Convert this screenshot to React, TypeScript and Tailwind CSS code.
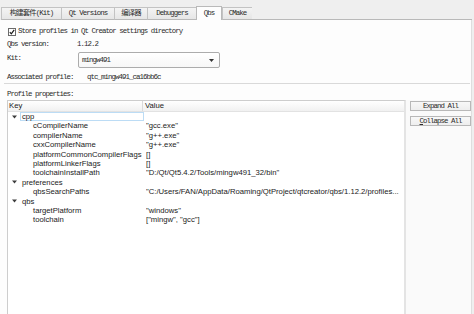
import React from "react"

const mono = "font-['Liberation_Mono','Noto_Sans_CJK_SC',monospace] text-[7.4px] tracking-[-0.94px] leading-[9px] text-[#2a2a2a]"
const sans = "font-['Liberation_Sans','Noto_Sans_CJK_SC',sans-serif] text-[7.7px] leading-[9.4px] text-[#1a1a1a]"

const tabs = [
    { label: "构建套件(Kit)", w: "w-[60px]" },
    { label: "Qt Versions", w: "w-[53px]" },
    { label: "编译器", w: "w-[33px]" },
    { label: "Debuggers", w: "w-[49px]" },
    { label: "Qbs", w: "w-[26px]", active: true },
    { label: "CMake", w: "w-[30px]" },
]

type Row = { key: string; value?: string; level: 0 | 1; focus?: boolean }

const rows: Row[] = [
    { key: "cpp", level: 0, focus: true },
    { key: "cCompilerName", value: "\"gcc.exe\"", level: 1 },
    { key: "compilerName", value: "\"g++.exe\"", level: 1 },
    { key: "cxxCompilerName", value: "\"g++.exe\"", level: 1 },
    { key: "platformCommonCompilerFlags", value: "[]", level: 1 },
    { key: "platformLinkerFlags", value: "[]", level: 1 },
    { key: "toolchainInstallPath", value: "\"D:/Qt/Qt5.4.2/Tools/mingw491_32/bin\"", level: 1 },
    { key: "preferences", level: 0 },
    { key: "qbsSearchPaths", value: "\"C:/Users/FAN/AppData/Roaming/QtProject/qtcreator/qbs/1.12.2/profiles...", level: 1 },
    { key: "qbs", level: 0 },
    { key: "targetPlatform", value: "\"windows\"", level: 1 },
    { key: "toolchain", value: "[\"mingw\", \"gcc\"]", level: 1 },
]

function Arrow() {
    return (
        <svg width="5" height="4" viewBox="0 0 5 4" className="ml-[4px] shrink-0">
            <path d="M0 0.5 L5 0.5 L2.5 3.5 Z" fill="#3c3c3c" />
        </svg>
    )
}

export default function App() {
    return (
        <div className="w-[474px] h-[314px] overflow-hidden bg-[#efefef] flex flex-col">
            {/* tab bar */}
            <div className="h-[20px] flex items-end pl-[1px] shrink-0">
                {tabs.map((t) =>
                    t.active ? (
                        <div
                            key={t.label}
                            className={`${t.w} h-[14px] bg-[#fdfdfd] border-l border-t border-r border-[#b9b9b9] flex items-center justify-center ${mono}`}
                        >
                            {t.label}
                        </div>
                    ) : (
                        <div
                            key={t.label}
                            className={`${t.w} h-[13px] bg-gradient-to-b from-[#f4f4f4] to-[#e6e6e6] border-l border-t border-b border-[#c3c3c3] border-b-[#b9b9b9] flex items-center justify-center pb-[1px] ${mono}`}
                        >
                            {t.label}
                        </div>
                    )
                )}
                <div className="w-[220px] h-[13px] border-b border-[#b9b9b9]" />
            </div>

            {/* panel */}
            <div className="w-[472px] flex-1 bg-[#fdfdfd] border-r border-[#dedede] flex flex-col pl-[7px] pr-[1px] min-h-0">
                <div className="mt-[7px] h-[9px] flex items-center">
                    <svg width="8" height="8" viewBox="0 0 8 8" className="ml-[1px] shrink-0">
                        <rect x="0.5" y="0.5" width="7" height="7" fill="#fff" stroke="#6a6a6a" />
                        <path d="M1.8 4.2 L3.3 5.8 L6.2 1.8" fill="none" stroke="#1a1a1a" strokeWidth="1.2" />
                    </svg>
                    <span className={`ml-[2px] ${mono}`}>Store profiles in Qt Creator settings directory</span>
                </div>

                <div className="mt-[4px] h-[9px] flex items-center">
                    <span className={`w-[70px] ${mono}`}>Qbs version:</span>
                    <span className={mono}>1.12.2</span>
                </div>

                <div className="mt-[3px] h-[17px] flex">
                    <span className={`w-[70px] mt-[2px] h-[9px] ${mono}`}>Kit:</span>
                    <div className="ml-[1px] w-[142px] h-[16px] border border-[#acacac] rounded-[2px] bg-gradient-to-b from-[#ffffff] to-[#f7f7f7] flex items-center pl-[3px] pr-[5px]">
                        <span className={`flex-1 ${mono}`}>mingw491</span>
                        <svg width="5" height="3" viewBox="0 0 5 3">
                            <path d="M0 0 L5 0 L2.5 3 Z" fill="#333" />
                        </svg>
                    </div>
                </div>

                <div className="mt-[4px] h-[9px] flex items-center">
                    <span className={`w-[80px] ${mono}`}>Associated profile:</span>
                    <span className={mono}>qtc_mingw491_ca16bb6c</span>
                </div>

                <div className="mt-[1px] h-px bg-[#d9d9d9] -ml-[3px]" />

                <div className={`mt-[6px] h-[9px] ${mono}`}>Profile properties:</div>

                <div className="mt-[1px] flex-1 flex min-h-0">
                    {/* tree */}
                    <div className="w-[399px] bg-white border-l border-t border-[#cdcdcd] border-r-2 border-r-[#e4e4e4] flex flex-col">
                        <div className="h-[11px] shrink-0 flex bg-gradient-to-b from-[#ffffff] to-[#f1f1f1] border-b border-[#e2e2e2]">
                            <div className={`w-[135px] border-r border-[#dadada] pl-[1px] flex items-center ${sans}`}>Key</div>
                            <div className={`pl-[2px] flex items-center ${sans}`}>Value</div>
                        </div>
                        {rows.map((r) => (
                            <div key={r.key} className="h-[9.4px] flex shrink-0">
                                <div className="w-[138px] flex items-center">
                                    {r.level === 0 ? (
                                        <>
                                            <Arrow />
                                            <span
                                                className={`ml-[3px] h-full flex items-center pl-[1px] ${r.focus ? "w-[124px] border border-[#bcdcf5]" : "pl-[2px]"} ${sans}`}
                                            >
                                                {r.key}
                                            </span>
                                        </>
                                    ) : (
                                        <span className={`pl-[25px] whitespace-nowrap ${sans}`}>{r.key}</span>
                                    )}
                                </div>
                                <div className={`w-[258px] whitespace-nowrap overflow-hidden flex items-center ${sans}`}>
                                    {r.value}
                                </div>
                            </div>
                        ))}
                    </div>

                    {/* buttons */}
                    <div className="flex-1 bg-[#fafafa] flex flex-col pl-[4px]">
                        <button className={`mt-[1px] w-[61px] h-[10px] border border-[#b8b8b8] bg-gradient-to-b from-[#f8f8f8] to-[#eeeeee] flex items-center justify-center ${mono}`}>
                            Expand All
                        </button>
                        <button className={`mt-[5px] w-[61px] h-[10px] border border-[#b8b8b8] bg-gradient-to-b from-[#f8f8f8] to-[#eeeeee] flex items-center justify-center ${mono}`}>
                            <span className="underline">C</span>
                            <span>ollapse All</span>
                        </button>
                    </div>
                </div>
            </div>
        </div>
    )
}
